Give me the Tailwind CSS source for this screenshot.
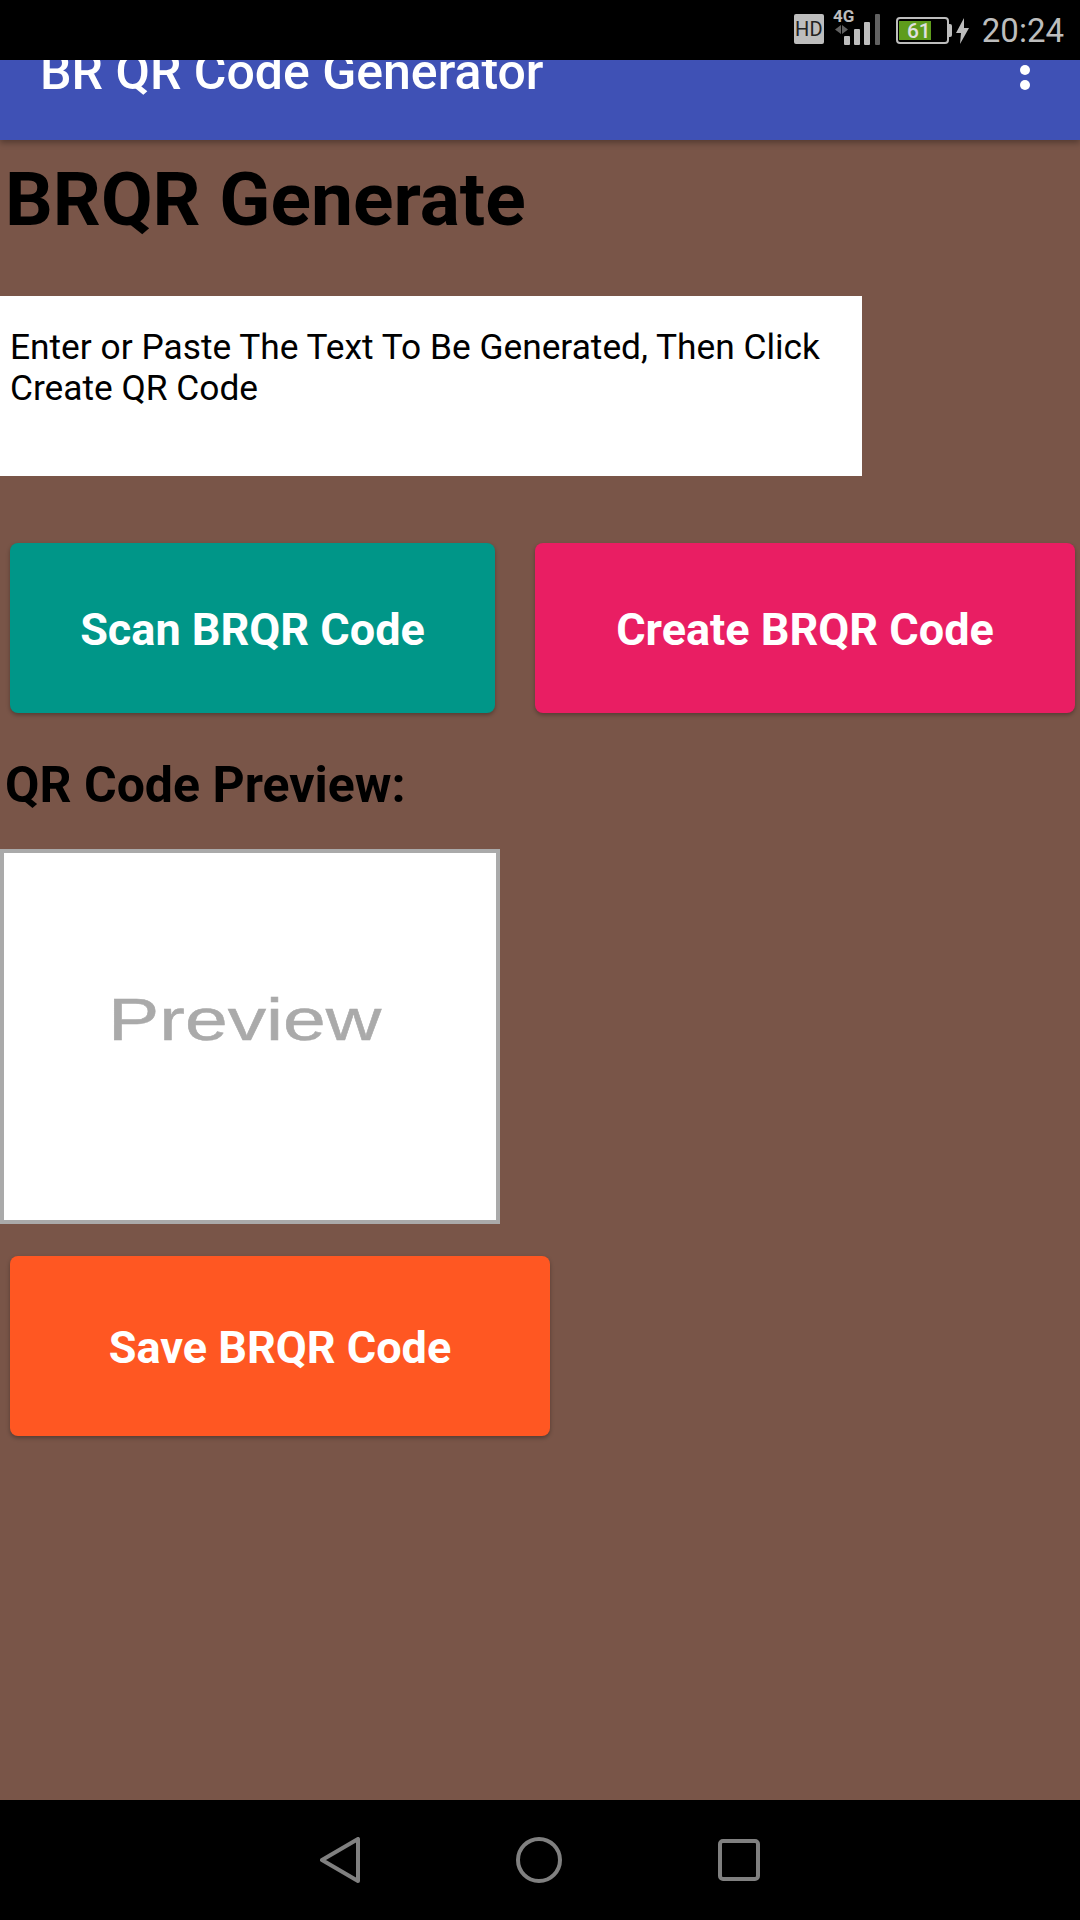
<!DOCTYPE html>
<html lang="en">
<head>
  <meta charset="UTF-8" />
  <meta name="viewport" content="width=device-width, initial-scale=1.0" />
  <title>BR QR Code Generator</title>
  <script src="https://cdn.jsdelivr.net/npm/@tailwindcss/browser@4"></script>
</head>
<body class="bg-black font-['Roboto',sans-serif]">
  <div class="w-[1080px] h-[1920px] flex flex-col overflow-hidden">
    <!-- status bar -->
    <div class="h-[60px] shrink-0 bg-black flex items-center justify-end text-[#bdbdbd] z-20">
      <div class="w-[30px] h-[30px] rounded-[2px] bg-[#bdbdbd] text-[#222222] text-[20px] leading-[30px] text-center mt-[-2px]">HD</div>
      <svg class="ml-[9px] mt-[-5px]" width="48" height="35" viewBox="0 0 48 35">
        <text x="0" y="12" font-family="Roboto" font-weight="700" font-size="17" fill="#bdbdbd">4G</text>
        <path d="M8 15v9l-6-4.500zM9 15v9l6-4.500z" fill="#616161"/>
        <rect x="11" y="26" width="6" height="9" rx="1" fill="#bdbdbd"/>
        <rect x="21" y="19" width="6" height="16" rx="1" fill="#bdbdbd"/>
        <rect x="31" y="12" width="6" height="23" rx="1" fill="#bdbdbd"/>
        <rect x="42" y="4" width="5" height="31" rx="1" fill="#616161"/>
      </svg>
      <div class="ml-[15px] mr-[4px] mt-[1px] relative w-[53px] h-[27px] rounded-[4px] border-2 border-[#bdbdbd] px-[1px] py-[2px]">
        <div class="h-full w-[32px] bg-[#5e9c1c] text-[#e0e0e0] text-[21px] leading-[20px] font-medium text-right">61</div>
        <div class="absolute right-[-5px] top-[5px] w-[3px] h-[13px] bg-[#bdbdbd] rounded-r-[2px]"></div>
      </div>
      <svg class="ml-[3px] mt-[2px]" width="13" height="26" viewBox="0 0 13 26"><path d="M8 0L0 15h5l-1 11 9-16H8z" fill="#bdbdbd"/></svg>
      <div class="ml-[13px] mr-[16px] mt-[1px] text-[33px] leading-none">20:24</div>
    </div>

    <!-- app bar, title is cut off by the status bar -->
    <div class="h-[80px] shrink-0 bg-[#3f51b5] shadow-[0_3px_6px_rgba(0,0,0,0.3)] z-10 flex justify-between overflow-hidden">
      <div class="ml-[40px] mt-[-16px] text-white text-[50px] leading-[56px] font-medium whitespace-nowrap">BR QR Code Generator</div>
      <div class="mr-[50px] mt-[5px] flex flex-col gap-[5px]">
        <div class="w-[10px] h-[10px] rounded-full bg-white"></div>
        <div class="w-[10px] h-[10px] rounded-full bg-white"></div>
      </div>
    </div>

    <!-- content -->
    <div class="flex-1 bg-[#795548]">
      <h1 class="ml-[5px] mt-[17px] text-black text-[75px] leading-[84px] font-bold">BRQR Generate</h1>
      <div class="mt-[55px] w-[862px] h-[180px] bg-white text-black text-[35.300px] leading-[41px] px-[10px] pt-[31px]">Enter or Paste The Text To Be Generated, Then Click Create QR Code</div>
      <div class="mt-[67px] flex">
        <div class="ml-[10px] w-[485px] h-[170px] pt-[3px] rounded-[8px] bg-[#009688] text-white text-[45px] font-bold flex items-center justify-center shadow-[0_2px_4px_rgba(0,0,0,0.3)]">Scan BRQR Code</div>
        <div class="ml-[40px] w-[540px] h-[170px] pt-[3px] rounded-[8px] bg-[#e91e63] text-white text-[45px] font-bold flex items-center justify-center shadow-[0_2px_4px_rgba(0,0,0,0.3)]">Create BRQR Code</div>
      </div>
      <h2 class="ml-[5px] mt-[44px] text-black text-[50px] leading-[56px] font-bold">QR Code Preview:</h2>
      <div class="mt-[36px] w-[500px] h-[375px] bg-white border-[4px] border-[#aaaaaa] flex items-center justify-center">
        <span class="text-[#aaaaaa] text-[60px] leading-none font-['Liberation_Sans',sans-serif] scale-x-[1.280] [-webkit-text-stroke:0.5px_#aaaaaa] blur-[0.6px] mt-[-34px] mr-[10px]">Preview</span>
      </div>
      <div class="ml-[10px] mt-[32px] w-[540px] h-[180px] pt-[3px] rounded-[8px] bg-[#ff5722] text-white text-[45px] font-bold flex items-center justify-center shadow-[0_2px_4px_rgba(0,0,0,0.3)]">Save BRQR Code</div>
    </div>

    <!-- nav bar -->
    <div class="h-[120px] shrink-0 bg-black flex items-center justify-center gap-[156px]">
      <svg width="40" height="46" viewBox="0 0 40 46" fill="none" stroke="#808080" stroke-width="4" stroke-linejoin="round"><path d="M2 23L38 2v42z"/></svg>
      <svg width="46" height="46" viewBox="0 0 46 46" fill="none" stroke="#808080" stroke-width="4"><circle cx="23" cy="23" r="21"/></svg>
      <svg width="42" height="42" viewBox="0 0 42 42" fill="none" stroke="#808080" stroke-width="4"><rect x="2" y="2" width="38" height="38" rx="3"/></svg>
    </div>
  </div>
</body>
</html>
